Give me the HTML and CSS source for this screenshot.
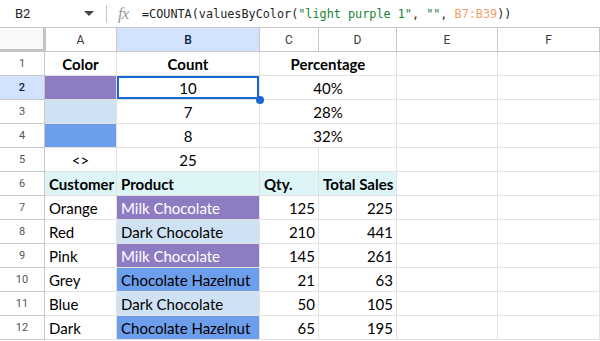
FILE: index.html
```html
<!DOCTYPE html>
<html lang="en">
<head>
  <meta charset="UTF-8" />
  <title>valuesByColor</title>
  <link rel="stylesheet" href="styles.css">
</head>
<body>
  <div class="formula-bar">
    <div class="name-box">B2</div>
    <div class="name-drop"></div>
    <div class="divider"></div>
    <div class="fx">fx</div>
    <div class="formula">=COUNTA(valuesByColor(<span class="str">"light purple 1"</span>, <span class="str">""</span>, <span class="rng">B7:B39</span>))</div>
  </div>

  <div class="sheet">
    <div class="corner"></div>
    <div class="col-head">A</div>
    <div class="col-head sel">B</div>
    <div class="col-head">C</div>
    <div class="col-head">D</div>
    <div class="col-head">E</div>
    <div class="col-head">F</div>

    <div class="row-head">1</div>
    <div class="cell center bold">Color</div>
    <div class="cell center bold">Count</div>
    <div class="cell center bold span2">Percentage</div>
    <div class="cell"></div>
    <div class="cell"></div>

    <div class="row-head sel">2</div>
    <div class="cell purple"></div>
    <div class="cell center active">10</div>
    <div class="cell center span2">40%</div>
    <div class="cell"></div>
    <div class="cell"></div>

    <div class="row-head">3</div>
    <div class="cell light"></div>
    <div class="cell center">7</div>
    <div class="cell center span2">28%</div>
    <div class="cell"></div>
    <div class="cell"></div>

    <div class="row-head">4</div>
    <div class="cell blue"></div>
    <div class="cell center">8</div>
    <div class="cell center span2">32%</div>
    <div class="cell"></div>
    <div class="cell"></div>

    <div class="row-head">5</div>
    <div class="cell center">&lt;&gt;</div>
    <div class="cell center">25</div>
    <div class="cell"></div>
    <div class="cell"></div>
    <div class="cell"></div>
    <div class="cell"></div>

    <div class="row-head">6</div>
    <div class="cell bold head">Customer</div>
    <div class="cell bold head">Product</div>
    <div class="cell bold head">Qty.</div>
    <div class="cell bold head">Total Sales</div>
    <div class="cell"></div>
    <div class="cell"></div>

    <div class="row-head">7</div>
    <div class="cell">Orange</div>
    <div class="cell purple">Milk Chocolate</div>
    <div class="cell num">125</div>
    <div class="cell num">225</div>
    <div class="cell"></div>
    <div class="cell"></div>

    <div class="row-head">8</div>
    <div class="cell">Red</div>
    <div class="cell light">Dark Chocolate</div>
    <div class="cell num">210</div>
    <div class="cell num">441</div>
    <div class="cell"></div>
    <div class="cell"></div>

    <div class="row-head">9</div>
    <div class="cell">Pink</div>
    <div class="cell purple">Milk Chocolate</div>
    <div class="cell num">145</div>
    <div class="cell num">261</div>
    <div class="cell"></div>
    <div class="cell"></div>

    <div class="row-head">10</div>
    <div class="cell">Grey</div>
    <div class="cell blue">Chocolate Hazelnut</div>
    <div class="cell num">21</div>
    <div class="cell num">63</div>
    <div class="cell"></div>
    <div class="cell"></div>

    <div class="row-head">11</div>
    <div class="cell">Blue</div>
    <div class="cell light">Dark Chocolate</div>
    <div class="cell num">50</div>
    <div class="cell num">105</div>
    <div class="cell"></div>
    <div class="cell"></div>

    <div class="row-head">12</div>
    <div class="cell">Dark</div>
    <div class="cell blue">Chocolate Hazelnut</div>
    <div class="cell num">65</div>
    <div class="cell num">195</div>
    <div class="cell"></div>
    <div class="cell"></div>
  </div>
</body>
</html>
```

FILE: styles.css
```css
body {
  margin: 0;
  padding: 0;
  width: 600px;
  height: 341px;
  overflow: hidden;
  background: white;
  font-family: Roboto, sans-serif;
}
.formula-bar {
  display: flex;
  align-items: center;
  height: 28px;
  box-sizing: border-box;
  border-bottom: 1px solid #c7c7c7;
}
.name-box {
  width: 80px;
  padding-left: 15px;
  box-sizing: border-box;
  font-size: 13px;
  color: #1f1f1f;
}
.name-drop {
  width: 0;
  height: 0;
  margin-left: 4px;
  border-left: 5px solid transparent;
  border-right: 5px solid transparent;
  border-top: 5px solid #444;
}
.divider {
  width: 1px;
  height: 18px;
  margin-left: 12px;
  background: #c7c7c7;
}
.fx {
  margin-left: 11px;
  width: 24px;
  font-family: "Liberation Serif", serif;
  font-style: italic;
  font-size: 17px;
  color: #9a9a9a;
  letter-spacing: -1px;
}
.formula {
  font-family: "DejaVu Sans Mono", monospace;
  font-size: 11.8px;
  color: #1f1f1f;
  white-space: nowrap;
}
.str {
  color: #188038;
}
.rng {
  color: #f4a067;
}
.sheet {
  display: grid;
  grid-template-columns: 45px 72px 143px 59px 78px 101px 102px;
  grid-template-rows: 24px repeat(12, 24px);
}
.corner {
  background: #f8f9fa;
  border-right: 3px solid #c4c4c4;
  border-bottom: 3px solid #c4c4c4;
  box-sizing: border-box;
  margin-right: -1px;
}
.col-head {
  display: flex;
  align-items: center;
  justify-content: center;
  font-size: 12px;
  color: #3c3c3c;
  border-right: 1px solid #c7c7c7;
  border-bottom: 1px solid #c7c7c7;
}
.col-head:last-child {
  border-right: none;
}
.row-head {
  display: flex;
  align-items: center;
  justify-content: center;
  font-size: 11px;
  color: #555;
  border-right: 1px solid #c7c7c7;
  border-bottom: 1px solid #c7c7c7;
}
.sel {
  background: #d3e3fd;
  color: #0b1d3c;
  font-weight: 500;
}
.cell {
  position: relative;
  display: flex;
  align-items: center;
  padding: 1px 4px 0;
  font-family: Lato, "Open Sans", sans-serif;
  font-size: 15px;
  color: #000;
  white-space: nowrap;
  border-right: 1px solid #e1e1e1;
  border-bottom: 1px solid #e1e1e1;
}
.center {
  justify-content: center;
}
.num {
  justify-content: flex-end;
  padding-right: 3px;
}
.bold {
  font-weight: bold;
}
.span2 {
  grid-column: span 2;
}
.head {
  background: #ddf5f7;
}
.purple {
  background: #8e7cc3;
  color: white;
}
.light {
  background: #cfe2f3;
}
.blue {
  background: #6d9eeb;
}
.active {
  box-shadow: inset 0 0 0 2px #1a66d2;
}
.active::after {
  content: "";
  position: absolute;
  right: -5px;
  bottom: -5px;
  width: 8px;
  height: 8px;
  border-radius: 50%;
  background: #1a66d2;
  z-index: 2;
}
```
